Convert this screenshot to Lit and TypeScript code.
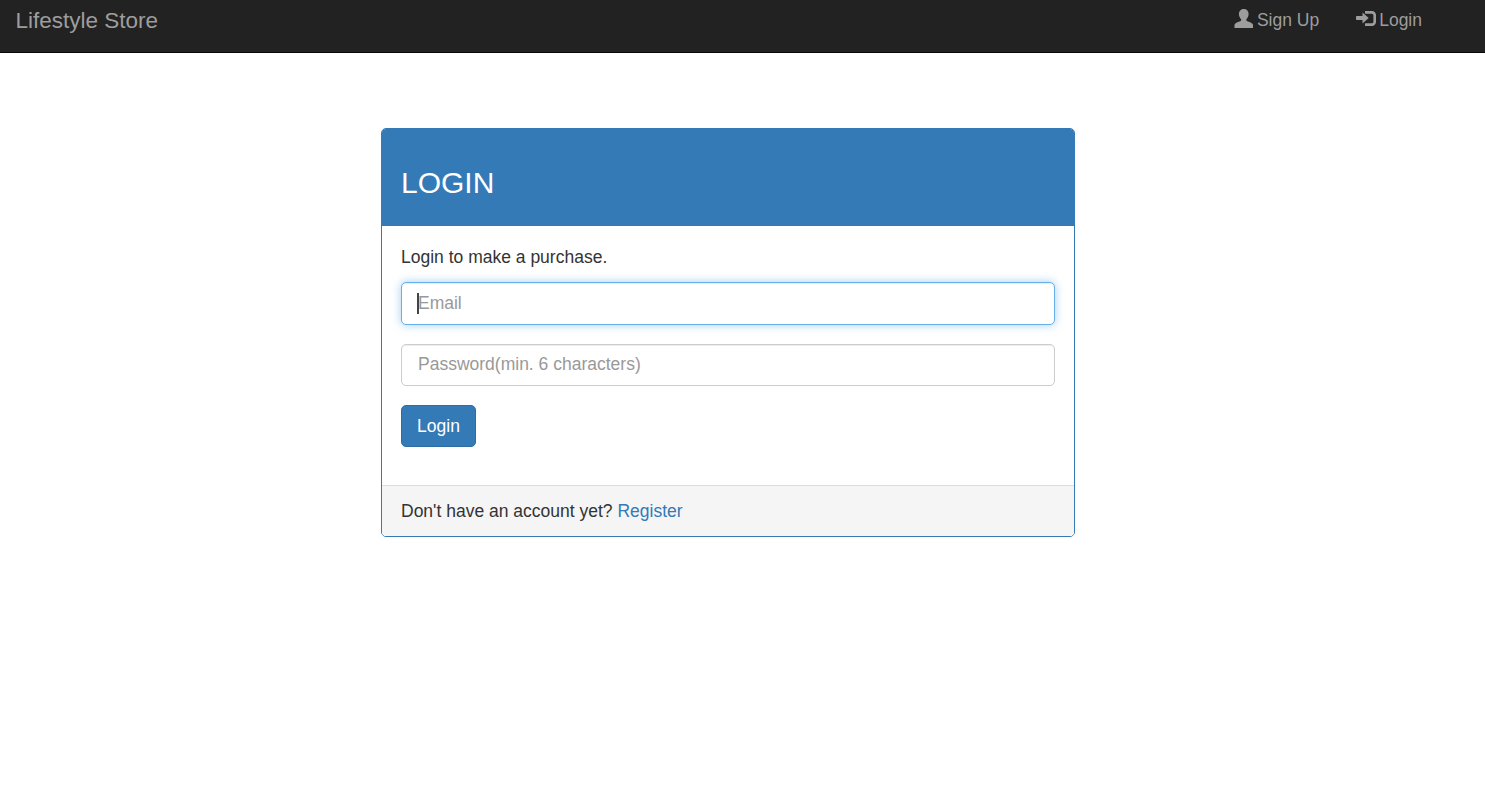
import { LitElement, html, css } from "lit";
import { customElement } from "lit/decorators.js";

@customElement("app-root")
export class AppRoot extends LitElement {
  static styles = css`
    :host { display: block; min-height: 800px; background: #fff; font-family: "Liberation Sans", Arial, sans-serif; font-size: 17.5px; color: #333; }
    * { box-sizing: border-box; }
    a { text-decoration: none; }
    .navbar { height: 53px; background: #222; border-bottom: 1px solid #080808; display: flex; justify-content: space-between; color: #9d9d9d; }
    .brand { color: #9d9d9d; font-size: 22.5px; line-height: 26px; padding: 8px 0 0 15.5px; }
    .nav { display: flex; gap: 37px; padding: 8px 63px 0 0; line-height: 25px; }
    .nav a { color: #9d9d9d; display: flex; align-items: flex-start; }
    .nav svg { width: 20px; height: 19px; fill: #9d9d9d; margin-top: 1px; margin-right: 3px; }
    .main { padding: 75px 0 0 381px; }
    .panel { width: 694px; border: 1px solid #337ab7; border-radius: 5px; overflow: hidden; }
    .head { height: 98px; margin-top: -1px; background: #337ab7; color: #fff; font-size: 30px; line-height: 33px; padding: 38px 19px 0; }
    .body { padding: 19px 19px 38px; height: 259px; }
    .body p { margin: 0 0 13px; line-height: 25px; height: 24px; }
    .field { position: relative; margin-bottom: 19px; }
    input { display: block; width: 100%; height: 42px; border: 1px solid #ccc; border-radius: 5px; padding: 0 16px 2px; font: inherit; color: #555; outline: none; box-shadow: inset 0 1px 1px rgba(0,0,0,.075); }
    input::placeholder { color: #999; opacity: 1; }
    input.focus { height: 43px; padding-bottom: 0; border-color: #66afe9; box-shadow: inset 0 1px 1px rgba(0,0,0,.075), 0 0 10px rgba(102,175,233,.6); caret-color: transparent; }
    .caret { position: absolute; left: 16px; top: 11px; width: 1.5px; height: 21px; background: #444; }
    button { display: block; width: 75px; height: 42px; background: #337ab7; border: 1px solid #2e6da4; border-radius: 5px; color: #fff; font: inherit; padding: 0; }
    .foot { height: 51px; background: #f5f5f5; border-top: 1px solid #ddd; padding: 13px 19px 0; line-height: 25px; }
    .foot a { color: #337ab7; }
  `;

  render() {
    return html`
      <nav class="navbar">
        <a class="brand">Lifestyle Store</a>
        <div class="nav">
          <a>
            <svg viewBox="0 0 20 19"><path d="M10 0c2.900 0 4.600 2.100 4.600 5 0 2.100-.9 3.900-2 5-.4.500-.5 1-.2 1.500.4.600 1.200.9 2.300 1.300 2 .7 3.800 1.500 4.300 3V19H.5v-3.200c.5-1.500 2.300-2.300 4.300-3 1.100-.4 1.900-.7 2.300-1.300.3-.5.2-1-.2-1.500-1.100-1.100-2-2.900-2-5C4.900 2.100 6.900 0 10 0z"/></svg>
            Sign Up
          </a>
          <a>
            <svg viewBox="0 0 20 19"><path d="M.8 7h5.700V3.600L12.700 9l-6.200 5.400V11H.8C.3 11 0 10.700 0 10.200V7.800C0 7.300.3 7 .8 7z"/><path d="M9 2h7c2.200 0 4 1.800 4 4v7c0 2.200-1.800 4-4 4H9v-2.700h6.500c1.200 0 1.900-.7 1.900-1.900V6.600c0-1.200-.7-1.900-1.900-1.900H9z"/></svg>
            Login
          </a>
        </div>
      </nav>
      <main class="main">
        <section class="panel">
          <div class="head">LOGIN</div>
          <div class="body">
            <p>Login to make a purchase.</p>
            <div class="field">
              <input class="focus" type="email" placeholder="Email" />
              <span class="caret"></span>
            </div>
            <div class="field">
              <input type="password" placeholder="Password(min. 6 characters)" />
            </div>
            <button type="button">Login</button>
          </div>
          <div class="foot">Don't have an account yet? <a>Register</a></div>
        </section>
      </main>
    `;
  }
}
